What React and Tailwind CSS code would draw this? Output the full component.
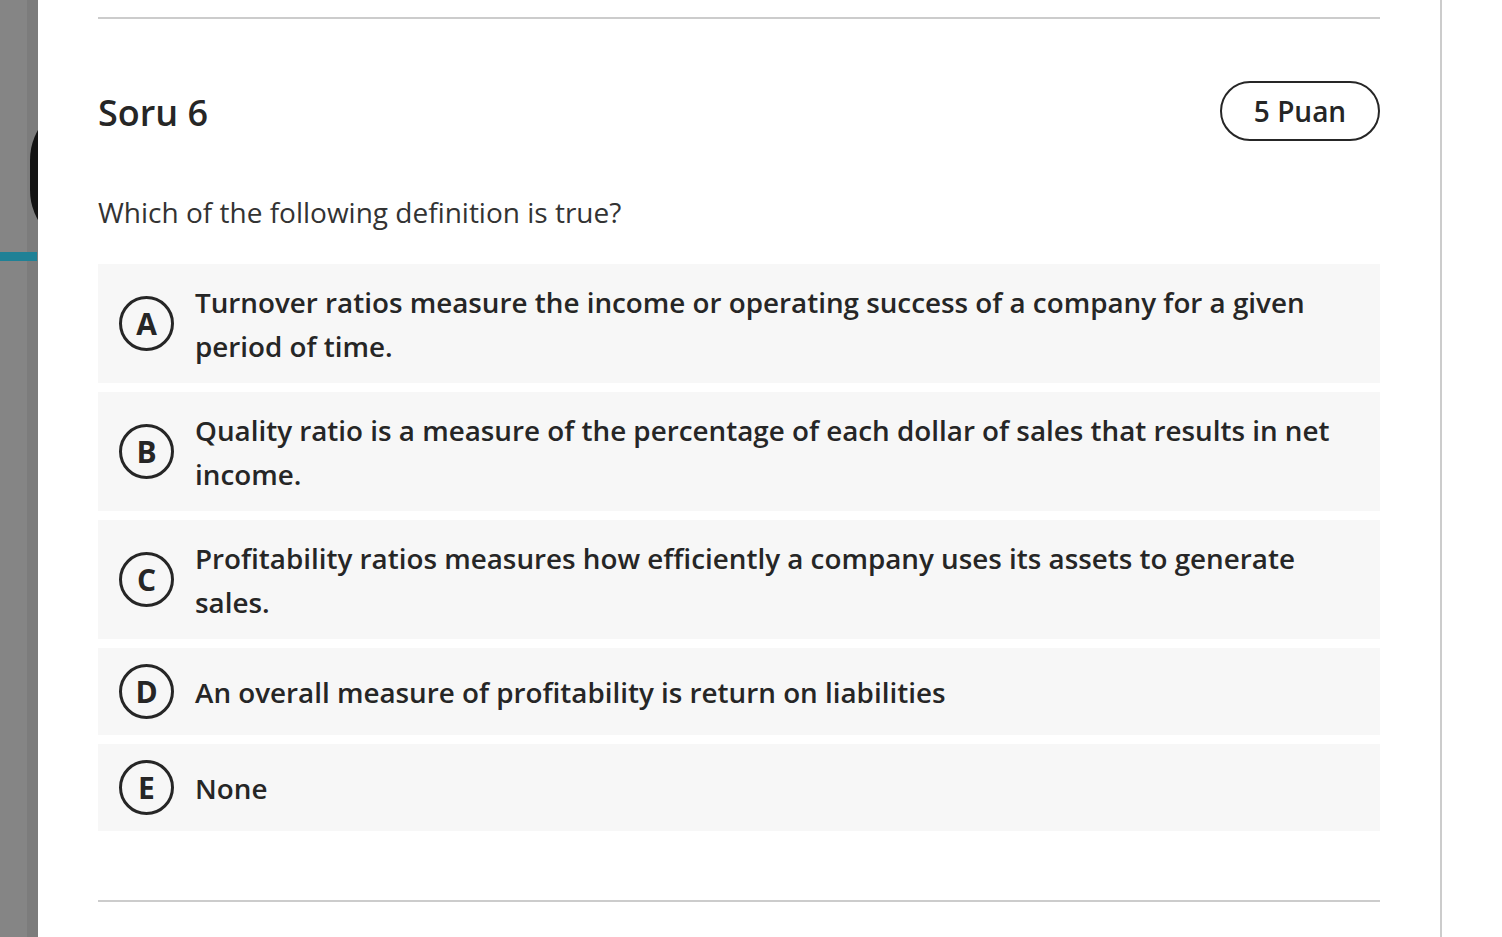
import React from "react";

const options = [
  { key: "A", text: "Turnover ratios measure the income or operating success of a company for a given period of time." },
  { key: "B", text: "Quality ratio is a measure of the percentage of each dollar of sales that results in net income." },
  { key: "C", text: "Profitability ratios measures how efficiently a company uses its assets to generate sales." },
  { key: "D", text: "An overall measure of profitability is return on liabilities" },
  { key: "E", text: "None" },
];

const Option = ({ letter, text }) => (
  <div className="flex min-h-[87px] items-center gap-[21px] bg-[#f7f7f7] pl-[21px] pr-[40px] py-[15.5px]">
    <span className="flex h-[55px] w-[55px] shrink-0 items-center justify-center rounded-full border-[3px] border-[#262626] text-[30px] font-bold leading-none text-[#262626]">
      {letter}
    </span>
    <p className="text-[27.8px] font-semibold leading-[44px] text-[#262626]">{text}</p>
  </div>
);

export default function App() {
  return (
    <div
      className="flex h-[937px] w-full overflow-hidden bg-white"
      style={{ fontFamily: '"Open Sans", "Noto Sans", sans-serif' }}
    >
      {/* shaded page behind the panel */}
      <div className="relative w-[38px] shrink-0 overflow-hidden bg-[#858585]">
        <div className="absolute inset-y-0 left-[27px] w-[11px] bg-[#7c7c7c]" />
        <div className="absolute left-[30px] top-[100px] h-[150px] w-[120px] rounded-full bg-[#141414]" />
        <div className="absolute left-0 top-[252px] h-[9px] w-[37px] bg-[#1f8196]" />
      </div>

      {/* question panel */}
      <div className="flex w-[1404px] shrink-0 flex-col border-r-2 border-[#cccccc] px-[60px] pt-[17px]">
        <div className="h-[2px] bg-[#cccccc]" />

        <div className="mt-[62px] flex items-center justify-between">
          <h2 className="pt-[3px] text-[36px] font-[550] leading-none text-[#262626]">Soru 6</h2>
          <span className="flex h-[60px] w-[160px] items-center justify-center rounded-full border-2 border-[#262626] text-[28px] font-[550] text-[#262626]">
            5 Puan
          </span>
        </div>

        <p className="mt-[51px] text-[28px] leading-[40px] text-[#333333]">
          Which of the following definition is true?
        </p>

        <div className="mt-[32px] flex flex-col gap-[9px]">
          {options.map((o) => (
            <Option key={o.key} letter={o.key} text={o.text} />
          ))}
        </div>

        <div className="mt-[69px] h-[2px] bg-[#cccccc]" />
      </div>

      <div className="flex-1 bg-white" />
    </div>
  );
}
